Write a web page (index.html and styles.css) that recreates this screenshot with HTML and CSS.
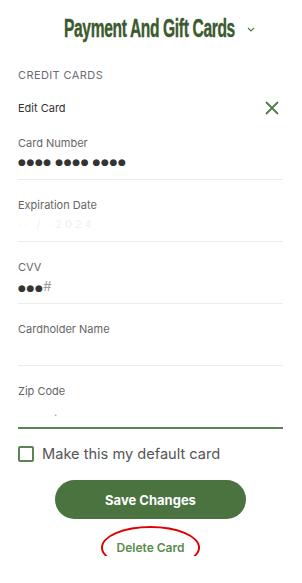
FILE: index.html
```html
<!DOCTYPE html>
<html lang="en">
<head>
    <meta charset="UTF-8">
    <meta name="viewport" content="width=device-width, initial-scale=1.0">
    <title>Payment And Gift Cards</title>
    <link rel="stylesheet" href="styles.css">
</head>
<body>
    <div class="page">
        <div class="header">
            <h1 class="title"><span>Payment And Gift Cards</span></h1>
            <svg class="chevron" width="8" height="5" viewBox="0 0 8 5"><path d="M1 1l3 3 3-3" fill="none" stroke="#4e7a44" stroke-width="1.2"/></svg>
        </div>

        <div class="section-title">CREDIT CARDS</div>

        <div class="edit-row">
            <span>Edit Card</span>
            <svg class="close" width="14" height="14" viewBox="0 0 14 14"><path d="M1 1l12 12M13 1L1 13" stroke="#4e7a44" stroke-width="1.8"/></svg>
        </div>

        <form class="card-form">
            <div class="field">
                <label>Card Number</label>
                <div class="value dots">●●●● ●●●● ●●●●</div>
            </div>
            <div class="field">
                <label>Expiration Date</label>
                <div class="value faint">·· / ·2024·</div>
            </div>
            <div class="field">
                <label>CVV</label>
                <div class="value dots">●●●<span class="hash">#</span></div>
            </div>
            <div class="field">
                <label>Cardholder Name</label>
                <div class="value"></div>
            </div>
            <div class="field active">
                <label>Zip Code</label>
                <div class="value"><span class="zip-dot">.</span></div>
            </div>

            <label class="checkbox-row">
                <span class="checkbox"></span>
                Make this my default card
            </label>

            <button type="button" class="save-btn">Save Changes</button>

            <div class="delete-wrap">
                <a href="#delete" class="delete-link">Delete Card</a>
            </div>
        </form>
    </div>
</body>
</html>
```

FILE: styles.css
```css
body {
    margin: 0;
    padding: 0;
    background-color: #ffffff;
    font-family: Inter, "Liberation Sans", Arial, sans-serif;
    color: #333;
}

.page {
    padding: 0 19px 0 18px;
}

/* Tiêu đề */
.header {
    display: flex;
    align-items: center;
    justify-content: center;
    height: 56px;
    padding-left: 18px;
}

.title {
    margin: 0;
    width: 170px;
    display: flex;
    justify-content: center;
    font-family: "Liberation Sans", Arial, sans-serif;
    font-weight: bold;
    font-size: 26px;
    color: #3b5a2e;
    letter-spacing: -0.6px;
}

.title span {
    display: inline-block;
    white-space: nowrap;
    transform: scaleX(0.6);
    -webkit-text-stroke: 0.4px #3b5a2e;
}

.chevron {
    margin-left: 13px;
    margin-top: 2px;
}

.section-title {
    margin-top: 12px;
    font-size: 11px;
    line-height: 14px;
    color: #6b6d72;
    letter-spacing: 0.4px;
}

.edit-row {
    display: flex;
    justify-content: space-between;
    align-items: center;
    margin-top: 19px;
    font-size: 11px;
    color: #333;
}

.close {
    margin-right: 4px;
}

.card-form {
    margin: 0;
}

.field {
    padding-top: 18px;
    border-bottom: 1px solid #ececec;
}

.field label {
    display: block;
    font-size: 11px;
    line-height: 14px;
    color: #666;
}

.field:first-child {
    padding-top: 21px;
}

.value {
    height: 20px;
    margin-top: 2px;
    margin-bottom: 7px;
    line-height: 20px;
}

.dots {
    font-family: "DejaVu Sans", sans-serif;
    font-size: 9px;
    letter-spacing: 0.6px;
    color: #333;
}

.hash {
    font-family: Inter, sans-serif;
    font-size: 13px;
    color: #999;
    letter-spacing: 0;
}

.faint {
    font-size: 11px;
    color: #f1f1f1;
    letter-spacing: 3px;
}

.field.active {
    border-bottom: 2px solid #5b8550;
}

.zip-dot {
    margin-left: 36px;
    color: #999;
    font-size: 11px;
}

.checkbox-row {
    display: flex;
    align-items: center;
    gap: 8px;
    margin-top: 16px;
    font-size: 14.6px;
    color: #555;
}

.checkbox {
    width: 12px;
    height: 12px;
    border: 2px solid #5b8550;
    border-radius: 2px;
}

.save-btn {
    display: block;
    margin: 17px auto 0;
    width: 191px;
    height: 39px;
    border: none;
    border-radius: 20px;
    background-color: #4a7340;
    color: white;
    font-family: Inter, "Liberation Sans", sans-serif;
    font-weight: bold;
    font-size: 13px;
    cursor: pointer;
}

.delete-wrap {
    display: flex;
    justify-content: center;
    margin-top: 21px;
}

/* Vòng tròn đỏ đánh dấu */
.delete-link {
    position: relative;
    color: #5a8a4c;
    font-weight: 600;
    font-size: 12px;
    text-decoration: none;
    line-height: 16px;
}

.delete-link::after {
    content: "";
    position: absolute;
    left: -16px;
    right: -16px;
    top: -14px;
    bottom: -13px;
    border: 2px solid #e00000;
    border-radius: 50%;
}
```
